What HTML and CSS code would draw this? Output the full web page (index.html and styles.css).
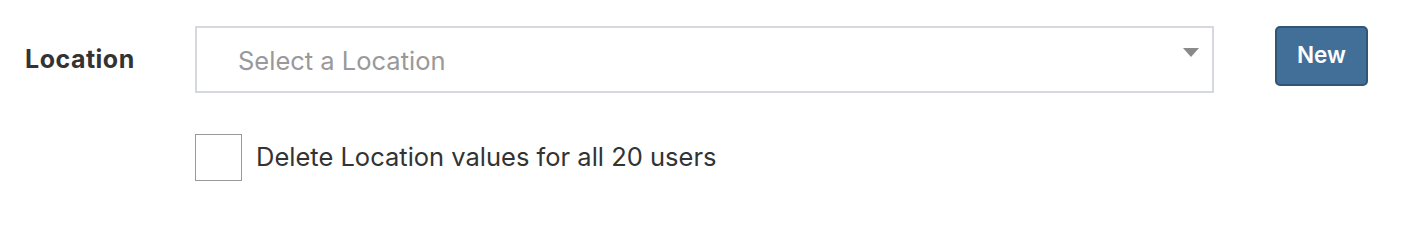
FILE: index.html
```html
<!DOCTYPE html>
<html lang="en">
<head>
<meta charset="utf-8">
<title>Location</title>
<link rel="stylesheet" href="styles.css">
</head>
<body>
<div class="form">
  <div class="row">
    <label class="label">Location</label>
    <div class="select">
      <span class="placeholder">Select a Location</span>
      <span class="arrow"></span>
    </div>
    <button class="btn" type="button">New</button>
  </div>
  <div class="row check-row">
    <span class="checkbox"></span>
    <span class="check-text">Delete Location values for all 20 users</span>
  </div>
</div>
</body>
</html>
```
FILE: styles.css
```css
html, body {
  margin: 0;
  padding: 0;
  background: #ffffff;
}
body {
  font-family: Inter, "Noto Sans", "Liberation Sans", sans-serif;
  color: #333333;
}
.form {
  padding: 26px 0 0 25px;
}
.row {
  display: flex;
  align-items: flex-start;
}
.label {
  width: 170px;
  flex: none;
  font-size: 25px;
  font-weight: 700;
  letter-spacing: 0.5px;
  line-height: 66px;
  color: #333333;
}
.select {
  box-sizing: border-box;
  width: 1019px;
  height: 67px;
  flex: none;
  border: 2px solid #d5d8dd;
  display: flex;
  align-items: center;
  justify-content: space-between;
  padding: 0 13px 0 41px;
}
.placeholder {
  font-size: 25.5px;
  color: #999999;
  margin-top: 2px;
}
.arrow {
  width: 0;
  height: 0;
  border-left: 8px solid transparent;
  border-right: 8px solid transparent;
  border-top: 9px solid #8a8a8a;
  margin-top: -14px;
}
.btn {
  box-sizing: border-box;
  margin-left: 61px;
  width: 93px;
  height: 60px;
  flex: none;
  background: #426f97;
  border: 2px solid #2f5577;
  border-radius: 5px;
  color: #ffffff;
  font-family: Inter, "Noto Sans", "Liberation Sans", sans-serif;
  font-size: 22.5px;
  font-weight: 600;
  padding: 0 0 4px 0;
}
.check-row {
  margin: 41px 0 0 170px;
  align-items: center;
}
.checkbox {
  box-sizing: border-box;
  width: 47px;
  height: 47px;
  border: 1px solid #999999;
  background: #ffffff;
  flex: none;
}
.check-text {
  margin-left: 14px;
  margin-top: -2px;
  font-size: 25.5px;
  color: #333333;
}
```
